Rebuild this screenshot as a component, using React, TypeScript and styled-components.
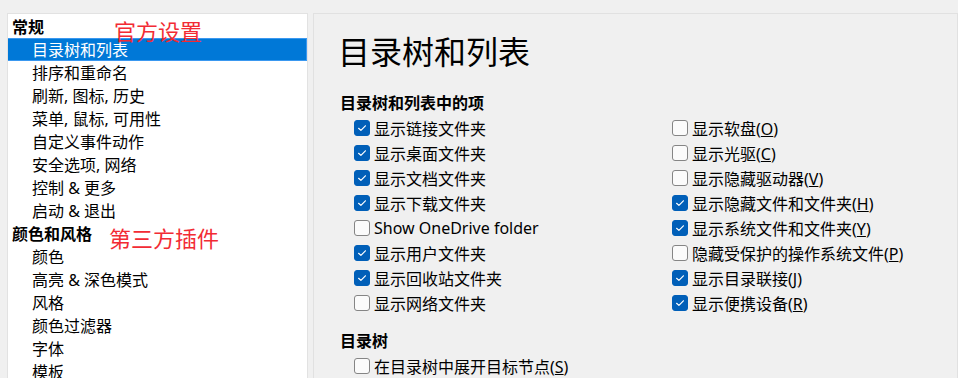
import styled, { createGlobalStyle } from "styled-components";

const GlobalStyle = createGlobalStyle`
    html, body {
        margin: 0;
        padding: 0;
        background: #f0f0f0;
        overflow: hidden;
    }
    body {
        font-family: "Segoe UI", "Noto Sans", "Noto Sans CJK SC", sans-serif;
        color: #000;
    }
`;

const Window = styled.div`
    display: flex;
    gap: 5px;
    width: 958px;
    height: 378px;
    padding: 13px 0 0 7px;
    box-sizing: border-box;
    overflow: hidden;
`;

const Sidebar = styled.div`
    width: 301px;
    flex-shrink: 0;
    height: 400px;
    box-sizing: border-box;
    background: #fff;
    border: 1px solid #e2e2e2;
    padding-top: 1px;
`;

const TreeRow = styled.div<{ $header?: boolean; $selected?: boolean }>`
    position: relative;
    height: 23px;
    line-height: 23px;
    box-sizing: border-box;
    font-size: 16px;
    font-weight: ${p => (p.$header ? 700 : 400)};
    padding-left: ${p => (p.$header ? "4px" : "24px")};
    white-space: nowrap;
    background: ${p => (p.$selected ? "#0078d7" : "transparent")};
    color: ${p => (p.$selected ? "#fff" : "#000")};
    border: 1px solid ${p => (p.$selected ? "#3a98f0" : "transparent")};
    border-left: none;
`;

// red annotation drawn over the tree
const Note = styled.span<{ $left: number }>`
    position: absolute;
    z-index: 2;
    left: ${p => p.$left}px;
    top: 1px;
    font-size: 22px;
    line-height: 26px;
    font-weight: 400;
    color: #f22b34;
    font-family: "Noto Sans CJK SC", sans-serif;
`;

const Panel = styled.div`
    flex: 1;
    height: 400px;
    box-sizing: border-box;
    border: 1px solid #e1e1e1;
    background: #f0f0f0;
    padding: 18px 0 0 26px;
`;

const Title = styled.h1`
    margin: 0 0 20px -2px;
    font-size: 32px;
    line-height: 40px;
    font-weight: 400;
`;

const SectionTitle = styled.div`
    font-size: 16px;
    line-height: 22px;
    font-weight: 700;
    margin-bottom: 1px;
`;

const Grid = styled.div`
    display: grid;
    grid-template-columns: 318px 1fr;
    grid-auto-flow: column;
    grid-template-rows: repeat(8, 25px);
    padding-left: 14px;
    margin-bottom: 15px;
`;

const List = styled.div`
    padding-left: 14px;
`;

const Option = styled.label`
    display: flex;
    align-items: center;
    gap: 4px;
    height: 25px;
    font-size: 16px;
    white-space: nowrap;
`;

const Box = styled.span<{ $checked: boolean }>`
    width: 16px;
    height: 16px;
    box-sizing: border-box;
    border-radius: 3px;
    display: inline-flex;
    align-items: center;
    justify-content: center;
    flex-shrink: 0;
    background: ${p => (p.$checked ? "#005fb8" : "#fbfbfb")};
    border: 1px solid ${p => (p.$checked ? "#005fb8" : "#858585")};
`;

function Check({ checked, children }: { checked: boolean; children: React.ReactNode }) {
    return (
        <Option>
            <Box $checked={checked}>
                {checked && (
                    <svg width="14" height="14" viewBox="0 0 14 14">
                        <path d="M3.6 7.3 L5.9 9.4 L10.4 4.8" fill="none" stroke="#fff" strokeWidth="1.2" strokeLinecap="round" strokeLinejoin="round" />
                    </svg>
                )}
            </Box>
            <span>{children}</span>
        </Option>
    );
}

const tree: { label: string; header?: boolean; note?: string; noteLeft?: number }[] = [
    { label: "常规", header: true, note: "官方设置", noteLeft: 106 },
    { label: "目录树和列表" },
    { label: "排序和重命名" },
    { label: "刷新, 图标, 历史" },
    { label: "菜单, 鼠标, 可用性" },
    { label: "自定义事件动作" },
    { label: "安全选项, 网络" },
    { label: "控制 & 更多" },
    { label: "启动 & 退出" },
    { label: "颜色和风格", header: true, note: "第三方插件", noteLeft: 101 },
    { label: "颜色" },
    { label: "高亮 & 深色模式" },
    { label: "风格" },
    { label: "颜色过滤器" },
    { label: "字体" },
    { label: "模板" },
];

const items: [string, boolean, string?][] = [
    ["显示链接文件夹", true],
    ["显示桌面文件夹", true],
    ["显示文档文件夹", true],
    ["显示下载文件夹", true],
    ["Show OneDrive folder", false],
    ["显示用户文件夹", true],
    ["显示回收站文件夹", true],
    ["显示网络文件夹", false],
    ["显示软盘", false, "O"],
    ["显示光驱", false, "C"],
    ["显示隐藏驱动器", false, "V"],
    ["显示隐藏文件和文件夹", true, "H"],
    ["显示系统文件和文件夹", true, "Y"],
    ["隐藏受保护的操作系统文件", false, "P"],
    ["显示目录联接", true, "J"],
    ["显示便携设备", true, "R"],
];

export default function App() {
    return (
        <>
            <GlobalStyle />
            <Window>
                <Sidebar>
                    {tree.map((row, i) => (
                        <TreeRow key={i} $header={row.header} $selected={i === 1}>
                            {row.label}
                            {row.note && <Note $left={row.noteLeft!}>{row.note}</Note>}
                        </TreeRow>
                    ))}
                </Sidebar>
                <Panel>
                    <Title>目录树和列表</Title>
                    <SectionTitle>目录树和列表中的项</SectionTitle>
                    <Grid>
                        {items.map(([label, checked, key]) => (
                            <Check key={label} checked={checked}>
                                {label}
                                {key && <>(<u>{key}</u>)</>}
                            </Check>
                        ))}
                    </Grid>
                    <SectionTitle>目录树</SectionTitle>
                    <List>
                        <Check checked={false}>在目录树中展开目标节点(<u>S</u>)</Check>
                    </List>
                </Panel>
            </Window>
        </>
    );
}
